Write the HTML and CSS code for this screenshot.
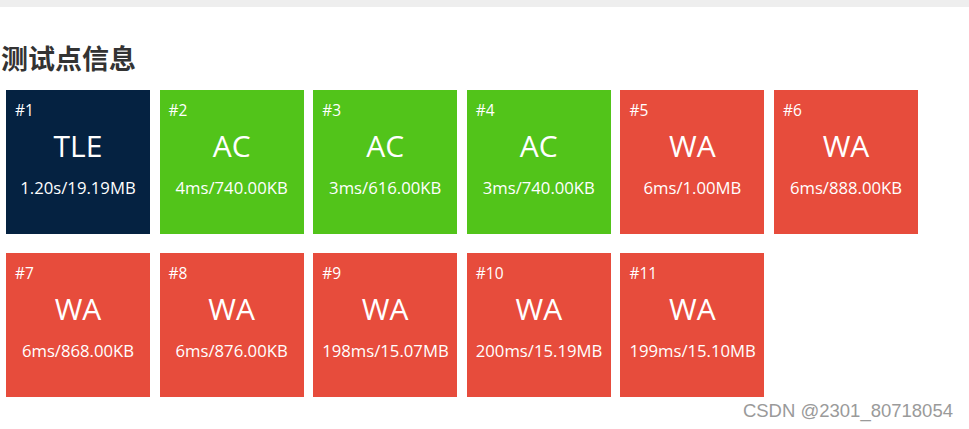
FILE: index.html
```html
<!DOCTYPE html>
<html lang="zh-CN">
<head>
  <meta charset="UTF-8" />
  <title>测试点信息</title>
  <meta name="viewport" content="width=device-width, initial-scale=1.0" />
  <link rel="stylesheet" href="styles.css">
</head>
<body>

  <div class="top-bar"></div>

  <div class="panel">
    <h2 class="panel-title">测试点信息</h2>

    <div class="cases">
      <div class="case tle">
        <div class="case-id">#1</div>
        <div class="case-status">TLE</div>
        <div class="case-info">1.20s/19.19MB</div>
      </div>
      <div class="case ac">
        <div class="case-id">#2</div>
        <div class="case-status">AC</div>
        <div class="case-info">4ms/740.00KB</div>
      </div>
      <div class="case ac">
        <div class="case-id">#3</div>
        <div class="case-status">AC</div>
        <div class="case-info">3ms/616.00KB</div>
      </div>
      <div class="case ac">
        <div class="case-id">#4</div>
        <div class="case-status">AC</div>
        <div class="case-info">3ms/740.00KB</div>
      </div>
      <div class="case wa">
        <div class="case-id">#5</div>
        <div class="case-status">WA</div>
        <div class="case-info">6ms/1.00MB</div>
      </div>
      <div class="case wa">
        <div class="case-id">#6</div>
        <div class="case-status">WA</div>
        <div class="case-info">6ms/888.00KB</div>
      </div>
      <div class="case wa">
        <div class="case-id">#7</div>
        <div class="case-status">WA</div>
        <div class="case-info">6ms/868.00KB</div>
      </div>
      <div class="case wa">
        <div class="case-id">#8</div>
        <div class="case-status">WA</div>
        <div class="case-info">6ms/876.00KB</div>
      </div>
      <div class="case wa">
        <div class="case-id">#9</div>
        <div class="case-status">WA</div>
        <div class="case-info">198ms/15.07MB</div>
      </div>
      <div class="case wa">
        <div class="case-id">#10</div>
        <div class="case-status">WA</div>
        <div class="case-info">200ms/15.19MB</div>
      </div>
      <div class="case wa">
        <div class="case-id">#11</div>
        <div class="case-status">WA</div>
        <div class="case-info">199ms/15.10MB</div>
      </div>
    </div>
  </div>

  <div class="watermark">CSDN @2301_80718054</div>

</body>
</html>
```

FILE: styles.css
```css
* {
  box-sizing: border-box;
}

body {
  margin: 0;
  padding: 0;
  background: #fff;
  font-family: 'Open Sans', 'Noto Sans CJK SC', sans-serif;
  color: #333;
  min-height: 429px;
  position: relative;
}

.top-bar {
  height: 7px;
  background: #eeeeee;
}

.panel {
  padding: 0 0 0 1px;
}

.panel-title {
  margin: 0;
  padding-top: 32px;
  font-family: 'Noto Sans CJK SC', sans-serif;
  font-size: 27px;
  line-height: 38px;
  font-weight: bold;
  color: #333;
}

.cases {
  display: grid;
  grid-template-columns: repeat(6, 144px);
  column-gap: 9.6px;
  row-gap: 19px;
  margin: 13px 0 0 5px;
}

.case {
  height: 144px;
  padding: 10px 9px 0;
  color: #fff;
}

.case.tle {
  background: #052241;
}

.case.ac {
  background: #52c41a;
}

.case.wa {
  background: #e74c3c;
}

.case-id {
  font-size: 15.5px;
  line-height: 20px;
}

.case-status {
  margin-top: 6px;
  font-size: 30px;
  line-height: 40px;
  text-align: center;
}

.case-info {
  margin-top: 11px;
  font-size: 16.7px;
  line-height: 22px;
  text-align: center;
  white-space: nowrap;
}

.watermark {
  position: absolute;
  right: 16px;
  bottom: 7px;
  font-family: 'Liberation Sans', Arial, sans-serif;
  font-size: 18.5px;
  line-height: 22px;
  color: #9a9a9a;
  text-shadow: 0 0 1px #fff;
}
```
